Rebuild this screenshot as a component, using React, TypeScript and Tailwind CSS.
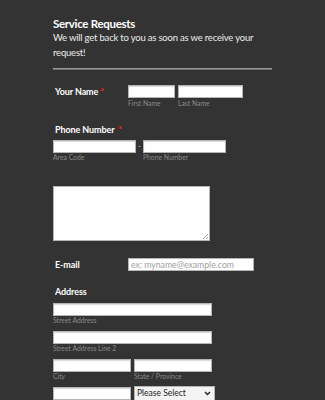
import React from "react";

const font = "font-['Lato','Liberation_Sans',sans-serif]";

function Box({ w, h = 13 }: { w: number; h?: number }) {
  return (
    <div
      className="bg-white border border-[#b5b5b5] shadow-[inset_0_1px_1px_rgba(0,0,0,0.15)]"
      style={{ width: w, height: h }}
    />
  );
}

function Sub({ children }: { children: React.ReactNode }) {
  return <div className="text-[6.8px] leading-[9px] text-[#8a8a8a]">{children}</div>;
}

const labelCls = "pl-[2px] text-[9px] tracking-[-0.1px] font-bold text-white";

export default function App() {
  return (
    <div className={`min-h-[400px] w-[325px] bg-[#333333] pl-[53px] pt-[18px] ${font}`}>
      <div className="w-[219px]">
        <h1 className="text-[11.5px] font-bold leading-[12px] tracking-[-0.3px] text-white">Service Requests</h1>
        <p className="text-[9.5px] leading-[15px] tracking-[-0.2px] text-[#ececec]">
          We will get back to you as soon as we receive your request!
        </p>
        <div className="mt-[8px] h-[2px] border-t border-[#9a9a9a] bg-[#6e6e6e]" />

        {/* Name */}
        <div className="mt-[15px] flex">
          <div className={`w-[75px] leading-[13px] ${labelCls}`}>
            Your Name <span className="text-[#ff1a1a]">*</span>
          </div>
          <div className="flex gap-[3px]">
            <div>
              <Box w={47} />
              <div className="mt-[1px]">
                <Sub>First Name</Sub>
              </div>
            </div>
            <div>
              <Box w={65} />
              <div className="mt-[1px]">
                <Sub>Last Name</Sub>
              </div>
            </div>
          </div>
        </div>

        {/* Phone */}
        <div className={`mt-[17px] leading-[10px] ${labelCls}`}>
          Phone Number <span className="ml-[2px] text-[#ff1a1a]">*</span>
        </div>
        <div className="mt-[5px] flex">
          <div>
            <Box w={83} />
            <Sub>Area Code</Sub>
          </div>
          <div className="w-[7px] text-center text-[8px] leading-[13px] text-[#ccc]">-</div>
          <div>
            <Box w={83} />
            <Sub>Phone Number</Sub>
          </div>
        </div>

        {/* Textarea */}
        <div className="relative mt-[24px] h-[55px] w-[157px] bg-white border border-[#b5b5b5]">
          <svg className="absolute bottom-0 right-0" width="7" height="7" viewBox="0 0 7 7">
            <path d="M6 1 L1 6 M6 4 L4 6" stroke="#999" strokeWidth="1" />
          </svg>
        </div>

        {/* Email */}
        <div className="mt-[17px] flex items-center">
          <div className={`w-[75px] leading-[13px] ${labelCls}`}>E-mail</div>
          <div className="flex h-[13px] w-[126px] items-center bg-white border border-[#b5b5b5] pl-[2px] text-[8.7px] text-[#a0a0a0]">
            ex: myname@example.com
          </div>
        </div>

        {/* Address */}
        <div className={`mt-[16px] leading-[10px] ${labelCls}`}>Address</div>
        <div className="mt-[6px]">
          <Box w={159} />
          <Sub>Street Address</Sub>
        </div>
        <div className="mt-[6px]">
          <Box w={159} />
          <Sub>Street Address Line 2</Sub>
        </div>
        <div className="mt-[6px] flex gap-[3px]">
          <div>
            <Box w={78} />
            <Sub>City</Sub>
          </div>
          <div>
            <Box w={78} />
            <Sub>State / Province</Sub>
          </div>
        </div>
        <div className="mt-[6px] flex gap-[3px]">
          <Box w={78} />
          <div className="flex h-[15px] w-[81px] -mt-[1px] items-center justify-between bg-[#f3f3f3] border border-[#b5b5b5] pl-[2px] pr-[3px] text-[8.5px] text-[#222]">
            <span>Please Select</span>
            <svg width="7" height="5" viewBox="0 0 7 5">
              <path d="M1 1 L3.5 3.5 L6 1" stroke="#222" strokeWidth="1.4" fill="none" />
            </svg>
          </div>
        </div>
      </div>
    </div>
  );
}
